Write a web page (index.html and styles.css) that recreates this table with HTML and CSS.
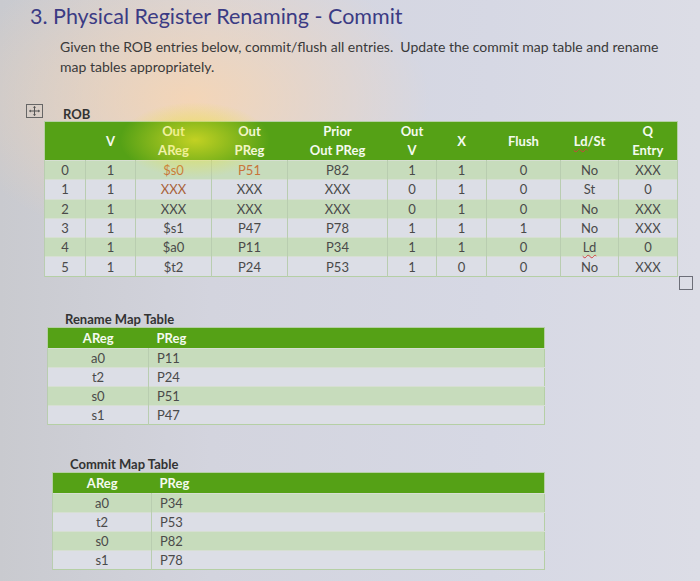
FILE: index.html
```html
<!DOCTYPE html>
<html>
<head>
<meta charset="utf-8">
<link rel="stylesheet" href="styles.css">
</head>
<body>
<div class="page">
  <h1 class="title">3. Physical Register Renaming - Commit</h1>
  <p class="intro">Given the ROB entries below, commit/flush all entries.&nbsp; Update the commit map table and rename map tables appropriately.</p>

  <section class="rob">
    <div class="handle">
      <svg width="17" height="14" viewBox="0 0 17 14"><rect x="0.5" y="0.5" width="16" height="13" fill="none" stroke="#666" stroke-width="1"/><path d="M8.5 2.5v9M3.5 7h10" stroke="#555" stroke-width="1"/><path d="M8.5 2l-1.6 1.8h3.2zM8.5 12l-1.6-1.8h3.2zM3 7l1.8-1.6v3.2zM14 7l-1.8-1.6v3.2z" fill="#555"/></svg>
    </div>
    <div class="caption rob-cap">ROB</div>
    <table class="grid robt">
      <colgroup>
        <col style="width:41px"><col style="width:50px"><col style="width:76px"><col style="width:76px"><col style="width:100px"><col style="width:49px"><col style="width:50px"><col style="width:74px"><col style="width:58px"><col style="width:59px">
      </colgroup>
      <thead>
        <tr><th></th><th>V</th><th>Out<br>AReg</th><th>Out<br>PReg</th><th>Prior<br>Out PReg</th><th>Out<br>V</th><th>X</th><th>Flush</th><th><span class="squig">Ld</span>/St</th><th>Q<br>Entry</th></tr>
      </thead>
      <tbody>
        <tr><td>0</td><td>1</td><td class="warm">$s0</td><td class="warm">P51</td><td>P82</td><td>1</td><td>1</td><td>0</td><td>No</td><td>XXX</td></tr>
        <tr><td>1</td><td>1</td><td class="warm2">XXX</td><td>XXX</td><td>XXX</td><td>0</td><td>1</td><td>0</td><td>St</td><td>0</td></tr>
        <tr><td>2</td><td>1</td><td>XXX</td><td>XXX</td><td>XXX</td><td>0</td><td>1</td><td>0</td><td>No</td><td>XXX</td></tr>
        <tr><td>3</td><td>1</td><td>$s1</td><td>P47</td><td>P78</td><td>1</td><td>1</td><td>1</td><td>No</td><td>XXX</td></tr>
        <tr><td>4</td><td>1</td><td>$a0</td><td>P11</td><td>P34</td><td>1</td><td>1</td><td>0</td><td><span class="squig">Ld</span></td><td>0</td></tr>
        <tr><td>5</td><td>1</td><td>$t2</td><td>P24</td><td>P53</td><td>1</td><td>0</td><td>0</td><td>No</td><td>XXX</td></tr>
      </tbody>
    </table>
    <div class="endbox"></div>
  </section>

  <section class="map rename">
    <div class="caption">Rename Map Table</div>
    <table class="grid mapt">
      <colgroup><col style="width:101px"><col></colgroup>
      <thead><tr><th>AReg</th><th class="l">PReg</th></tr></thead>
      <tbody>
        <tr><td>a0</td><td class="l">P11</td></tr>
        <tr><td>t2</td><td class="l">P24</td></tr>
        <tr><td>s0</td><td class="l">P51</td></tr>
        <tr><td>s1</td><td class="l">P47</td></tr>
      </tbody>
    </table>
  </section>

  <section class="map commit">
    <div class="caption">Commit Map Table</div>
    <table class="grid mapt">
      <colgroup><col style="width:99px"><col></colgroup>
      <thead><tr><th>AReg</th><th class="l">PReg</th></tr></thead>
      <tbody>
        <tr><td>a0</td><td class="l">P34</td></tr>
        <tr><td>t2</td><td class="l">P53</td></tr>
        <tr><td>s0</td><td class="l">P82</td></tr>
        <tr><td>s1</td><td class="l">P78</td></tr>
      </tbody>
    </table>
  </section>

  <div class="glow"></div>
</div>
</body>
</html>
```
FILE: styles.css
```css
html, body {
  margin: 0;
  padding: 0;
}
body {
  width: 700px;
  height: 581px;
  overflow: hidden;
  font-family: Lato, "Open Sans", sans-serif;
  color: #444;
  background:
    radial-gradient(ellipse 240px 150px at 190px 100px, rgba(255, 214, 170, 0.75), rgba(255, 214, 170, 0) 100%),
    linear-gradient(90deg, #c9cacf 0%, #d3d4de 30%, #d6d8e4 70%, #dcdde6 100%);
}
.page {
  position: relative;
  height: 581px;
}
.title {
  margin: 0;
  padding: 3px 0 0 30px;
  font-weight: 400;
  font-size: 21.5px;
  line-height: 26px;
  color: #3b3b84;
}
.intro {
  margin: 8px 0 0 60px;
  width: 616px;
  font-size: 14px;
  line-height: 20px;
  color: #3a3a3a;
}
.rob {
  position: relative;
  margin: 31px 0 0 44px;
}
.handle {
  position: absolute;
  left: -18px;
  top: -4px;
  line-height: 0;
}
.caption {
  font-weight: 700;
  font-size: 13px;
  line-height: 16px;
  color: #333;
}
.rob-cap {
  padding-left: 19px;
  line-height: 13px;
}
.grid {
  border-collapse: collapse;
  table-layout: fixed;
  font-size: 13px;
  border: 1px solid #b5cfa5;
}
.grid th {
  background: #55a116;
  color: #f4faef;
  font-weight: 700;
  text-align: center;
  padding: 0;
}
.grid td {
  text-align: center;
  padding: 0;
  color: #4a4a4a;
  border: 1px solid #b9cdb0;
  border-top: none;
  border-bottom: none;
}
.grid tbody tr:nth-child(odd) td {
  background: #c7dcbc;
}
.grid tbody tr:nth-child(even) td {
  background: #dcdee6;
}
.robt {
  width: 633px;
}
.robt th {
  height: 38px;
  line-height: 19px;
}
.robt td {
  height: 18.3px;
  line-height: 18px;
  border-top: 1px solid #d6dfd2;
}
.grid td.warm {
  color: #c8733a;
}
.grid td.warm2 {
  color: #a8623a;
}
.squig {
  text-decoration: underline wavy #d04040 1px;
  text-underline-offset: 2px;
}
.endbox {
  position: absolute;
  left: 635px;
  top: 168px;
  width: 12px;
  height: 12px;
  border: 1.5px solid #6c6e78;
}
.map .caption {
  padding-left: 18px;
}
.rename {
  margin: 34px 0 0 47px;
}
.commit {
  margin: 31px 0 0 52px;
}
.mapt {
  width: 498px;
}
.commit .mapt {
  width: 493px;
}
.mapt th {
  height: 20px;
  line-height: 20px;
}
.mapt td {
  height: 18px;
  line-height: 18px;
  border-top: 1px solid #d6dfd2;
}
.grid .l {
  text-align: left;
  padding-left: 8px;
  border-right: none;
}
.glow {
  position: absolute;
  left: 95px;
  top: 95px;
  width: 200px;
  height: 100px;
  pointer-events: none;
  background: radial-gradient(ellipse 75px 38px at 100px 45px, rgba(236, 228, 40, 0.72), rgba(236, 228, 40, 0) 100%);
}
```
